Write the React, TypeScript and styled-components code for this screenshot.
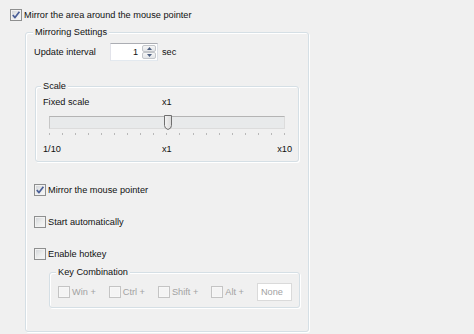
import React from "react";
import styled, { createGlobalStyle } from "styled-components";

const GlobalStyle = createGlobalStyle`
  html, body { margin: 0; padding: 0; background: #f0f0f0; }
  body {
    font-family: "Liberation Sans", Arial, sans-serif;
    font-size: 9.2px;
    color: #111;
  }
`;

const Window = styled.div`
  width: 474px;
  height: 334px;
  box-sizing: border-box;
  overflow: hidden;
  padding: 9px 0 0 10px;
  display: flex;
  flex-direction: column;
  background: #f0f0f0;
`;

const CheckRow = styled.div<{ $disabled?: boolean; $mt?: number; $ml?: number }>`
  display: flex;
  align-items: center;
  gap: 2px;
  height: 12px;
  line-height: 12px;
  white-space: nowrap;
  margin: ${(p) => p.$mt ?? 0}px 0 0 ${(p) => p.$ml ?? 0}px;
  color: ${(p) => (p.$disabled ? "#a2a2a2" : "#111")};
`;

const Box = styled.span<{ $disabled?: boolean }>`
  flex: none;
  width: 12px;
  height: 12px;
  box-sizing: border-box;
  border: 1px solid ${(p) => (p.$disabled ? "#c4c4c4" : "#8e8f8f")};
  background: ${(p) =>
    p.$disabled
      ? "#f4f4f4"
      : "linear-gradient(135deg, #cfd2d6 0%, #eceded 55%, #f8f8f8 100%)"};
  box-shadow: inset 0 0 0 1px ${(p) => (p.$disabled ? "#f7f7f7" : "#f2f2f2")};
  display: flex;
  align-items: center;
  justify-content: center;
`;

const Group = styled.div<{ $mt: number; $ml: number; $w: number; $h: number }>`
  flex: none;
  box-sizing: border-box;
  margin: ${(p) => p.$mt}px 0 0 ${(p) => p.$ml}px;
  width: ${(p) => p.$w}px;
  height: ${(p) => p.$h}px;
  border: 1px solid #d5dfe5;
  border-radius: 3px;
  box-shadow: inset 1px 1px 0 #fff, 1px 1px 0 #fff;
  display: flex;
  flex-direction: column;
`;

const Caption = styled.span<{ $ml: number }>`
  align-self: flex-start;
  height: 12px;
  line-height: 12px;
  margin: -7px 0 0 ${(p) => p.$ml}px;
  padding: 0 2px;
  background: #f0f0f0;
  white-space: nowrap;
`;

const UpdateRow = styled.div`
  display: flex;
  align-items: center;
  height: 18px;
  margin: 5px 0 0 8px;
`;

const FieldLabel = styled.span`
  width: 76px;
  flex: none;
`;

const SpinBox = styled.div`
  width: 48px;
  height: 18px;
  box-sizing: border-box;
  border: 1px solid;
  border-color: #abadb3 #dbdfe6 #e3e9ef #e2e3ea;
  background: #fff;
  display: flex;
  align-items: stretch;
  padding: 1px;
`;

const SpinValue = styled.span`
  flex: 1;
  text-align: right;
  padding-right: 4px;
  line-height: 14px;
`;

const Spinner = styled.div`
  width: 14px;
  display: flex;
  flex-direction: column;
`;

const SpinBtn = styled.span`
  flex: 1;
  box-sizing: border-box;
  border: 1px solid #c3c6ca;
  border-radius: 2px;
  background: linear-gradient(#f6f6f6, #e3e5e8);
  display: flex;
  align-items: center;
  justify-content: center;
`;

const Unit = styled.span`
  margin-left: 4px;
`;

const ValueRow = styled.div`
  display: grid;
  grid-template-columns: 119px auto;
  height: 12px;
  line-height: 12px;
  margin: 4px 0 0 7px;
`;

const Slider = styled.div`
  position: relative;
  margin: 8px 0 0 13px;
  width: 236px;
`;

const Track = styled.div`
  height: 13px;
  box-sizing: border-box;
  border: 1px solid;
  border-color: #b4b4b4 #dcdcdc #dcdcdc #c6c6c6;
  background: #e8eaeb;
`;

const Thumb = styled.svg`
  position: absolute;
  left: 114px;
  top: -1px;
`;

const Ticks = styled.div`
  display: flex;
  justify-content: space-between;
  height: 2px;
  margin-top: 4px;
`;

const Tick = styled.span`
  width: 1px;
  height: 2px;
  background: #b8b8b8;
`;

const ScaleLabels = styled.div`
  display: grid;
  grid-template-columns: 119px 1fr auto;
  height: 12px;
  line-height: 12px;
  margin: 8px 6px 0 7px;
`;

const KeyRow = styled.div`
  display: flex;
  align-items: center;
  gap: 13px;
  height: 18px;
  margin: 5px 0 0 8px;
`;

const NoneBox = styled.span`
  width: 35px;
  height: 18px;
  box-sizing: border-box;
  border: 1px solid #dadada;
  background: #fff;
  color: #a2a2a2;
  line-height: 16px;
  padding-left: 3px;
`;

const Check = () => (
  <svg width="10" height="10" viewBox="0 0 10 10">
    <polyline
      points="1.8,5 4,7.6 8.4,1.8"
      fill="none"
      stroke="#4a5f97"
      strokeWidth="1.7"
      strokeLinejoin="round"
    />
  </svg>
);

const CheckBox: React.FC<{
  label: string;
  checked?: boolean;
  disabled?: boolean;
  mt?: number;
  ml?: number;
}> = ({ label, checked, disabled, mt, ml }) => (
  <CheckRow $disabled={disabled} $mt={mt} $ml={ml}>
    <Box $disabled={disabled}>{checked && <Check />}</Box>
    <span>{label}</span>
  </CheckRow>
);

const Arrow: React.FC<{ up?: boolean }> = ({ up }) => (
  <svg width="5" height="3" viewBox="0 0 5 3">
    <polygon points={up ? "0,3 5,3 2.5,0" : "0,0 5,0 2.5,3"} fill="#4d5f80" />
  </svg>
);

export default function App() {
  const ticks = Array.from({ length: 19 });
  return (
    <>
      <GlobalStyle />
      <Window>
        <CheckBox label="Mirror the area around the mouse pointer" checked />
        <Group $mt={11} $ml={15} $w={284} $h={300}>
          <Caption $ml={7}>Mirroring Settings</Caption>
          <UpdateRow>
            <FieldLabel>Update interval</FieldLabel>
            <SpinBox>
              <SpinValue>1</SpinValue>
              <Spinner>
                <SpinBtn>
                  <Arrow up />
                </SpinBtn>
                <SpinBtn>
                  <Arrow />
                </SpinBtn>
              </Spinner>
            </SpinBox>
            <Unit>sec</Unit>
          </UpdateRow>

          <Group $mt={25} $ml={9} $w={264} $h={76}>
            <Caption $ml={5}>Scale</Caption>
            <ValueRow>
              <span>Fixed scale</span>
              <span>x1</span>
            </ValueRow>
            <Slider>
              <Track />
              <Thumb width="10" height="15" viewBox="0 0 10 15">
                <defs>
                  <linearGradient id="tg" x1="0" y1="0" x2="1" y2="0">
                    <stop offset="0" stopColor="#f4f4f4" />
                    <stop offset="1" stopColor="#d9d9d9" />
                  </linearGradient>
                </defs>
                <path
                  d="M1.5 0.5 H8.5 V10.5 Q8.5 13.5 5 14.5 Q1.5 13.5 1.5 10.5 Z"
                  fill="url(#tg)"
                  stroke="#6f6f6f"
                />
              </Thumb>
              <Ticks>
                {ticks.map((_, i) => (
                  <Tick key={i} />
                ))}
              </Ticks>
            </Slider>
            <ScaleLabels>
              <span>1/10</span>
              <span>x1</span>
              <span>x10</span>
            </ScaleLabels>
          </Group>

          <CheckBox label="Mirror the mouse pointer" checked mt={22} ml={8} />
          <CheckBox label="Start automatically" mt={20} ml={8} />
          <CheckBox label="Enable hotkey" mt={20} ml={8} />

          <Group $mt={12} $ml={23} $w={251} $h={36}>
            <Caption $ml={6}>Key Combination</Caption>
            <KeyRow>
              <CheckBox label="Win +" disabled />
              <CheckBox label="Ctrl +" disabled />
              <CheckBox label="Shift +" disabled />
              <CheckBox label="Alt +" disabled />
              <NoneBox>None</NoneBox>
            </KeyRow>
          </Group>
        </Group>
      </Window>
    </>
  );
}
